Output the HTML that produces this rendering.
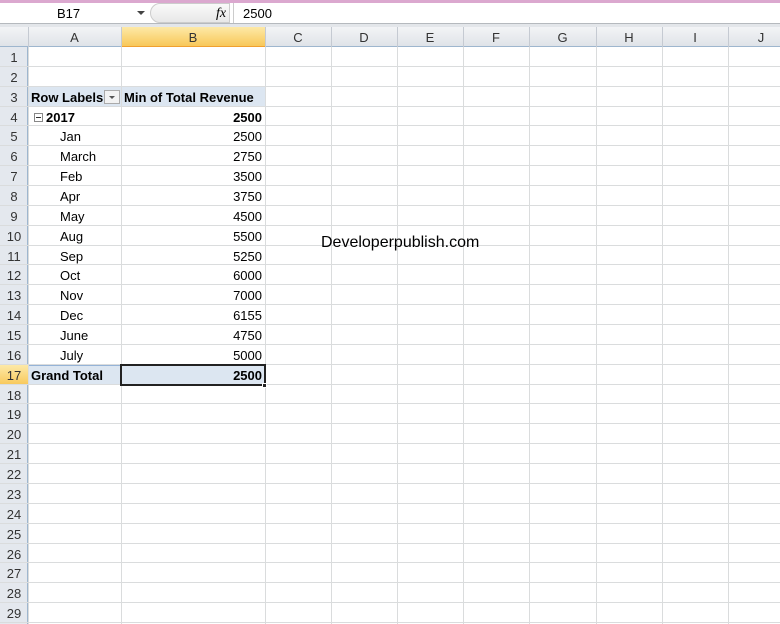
<!DOCTYPE html><html style="overflow:hidden;height:624px"><head><style>
body{margin:0;width:780px;height:624px;overflow:hidden;background:#fff;font-family:"Liberation Sans",sans-serif;position:relative}
div{position:absolute;box-sizing:border-box}
.t{font-size:13px;color:#000;white-space:nowrap;line-height:21px}
</style></head><body>
<div style="left:0;top:0;width:780px;height:3px;background:#dba8cf"></div>
<div style="left:0;top:23px;width:780px;height:4px;background:#e3e6ea;border-top:1px solid #b5b9be"></div>
<div class="t" style="left:57px;top:3px;font-size:13px">B17</div>
<div style="left:137px;top:11px;border:4px solid transparent;border-top:4px solid #444;width:0;height:0"></div>
<div style="left:150px;top:3px;width:80px;height:20px;border-radius:10px 0 0 10px;border:1px solid #ccc;background:linear-gradient(#fafafa,#e8e8e8)"></div>
<div class="t" style="left:216px;top:3px;font-style:italic;font-family:'Liberation Serif',serif;font-size:14px">fx</div>
<div style="left:233px;top:3px;width:1px;height:20px;background:#ccc"></div>
<div class="t" style="left:243px;top:3px;font-size:13px">2500</div>
<div id="g"></div>
<script>
var cols=[0,28,121,265,331,397,463,529,596,662,728,794],names=" ABCDEFGHIJ";
var h='';var top0=47,rh=19.86;
h+='<div style="left:0;top:27px;width:780px;height:20px;background:linear-gradient(#f3f4f6,#dfe3e8);border-bottom:1px solid #9eb6ce"></div>';
h+='<div style="left:0;top:47px;width:28px;height:577px;background:#e4e8ee;border-right:1px solid #9eb6ce"></div>';
h+='<div style="left:121px;top:27px;width:144px;height:20px;background:linear-gradient(#fde9a7,#f8c85a);border-bottom:1px solid #f0a030"></div>';
h+='<div style="left:0;top:'+(top0+16*rh)+'px;width:28px;height:'+rh+'px;background:linear-gradient(#fde9a7,#f8c85a)"></div>';
h+='<div style="left:28px;top:'+(top0+2*rh)+'px;width:237px;height:'+rh+'px;background:#dce6f1;border-bottom:1px solid #95b3d7"></div>';
h+='<div style="left:28px;top:'+(top0+16*rh)+'px;width:237px;height:'+rh+'px;background:#dce6f1;border-top:1px solid #95b3d7"></div>';
for(var i=1;i<cols.length;i++){var x=cols[i];h+='<div style="left:'+x+'px;top:27px;width:1px;height:20px;background:#c5cad2"></div>';h+='<div style="left:'+x+'px;top:47px;width:1px;height:577px;background:#dadcdd"></div>';
if(i<11)h+='<div class="t" style="left:'+cols[i]+'px;width:'+(cols[i+1]-cols[i])+'px;top:27px;text-align:center;color:#333">'+names[i]+'</div>';}
for(var r=1;r<=29;r++){var y=top0+r*rh;h+='<div style="left:0;top:'+(y-1)+'px;width:780px;height:1px;background:#dadcdd"></div>';
h+='<div class="t" style="left:0;width:28px;text-align:center;top:'+(y-rh)+'px;color:#333">'+r+'</div>';}
var d=[["Jan",2500],["March",2750],["Feb",3500],["Apr",3750],["May",4500],["Aug",5500],["Sep",5250],["Oct",6000],["Nov",7000],["Dec",6155],["June",4750],["July",5000]];
function cell(r,x,w,txt,st){return '<div class="t" style="left:'+x+'px;width:'+w+'px;top:'+(top0+(r-1)*rh)+'px;'+st+'">'+txt+'</div>';}
h+=cell(3,31,90,'<b>Row Labels</b>','');
h+='<div style="left:104px;top:'+(top0+2*rh+3)+'px;width:16px;height:14px;border:1px solid #aaa;background:#f2f2f2"><div style="left:4px;top:5px;border:3px solid transparent;border-top:3px solid #555;width:0;height:0"></div></div>';
h+=cell(3,124,140,'<b>Min of Total Revenue</b>','');
h+='<div style="left:34px;top:'+(top0+3*rh+6)+'px;width:9px;height:9px;border:1px solid #888;background:#fff"><div style="left:1px;top:3px;width:5px;height:1px;background:#333"></div></div>';
h+=cell(4,46,60,'<b>2017</b>','');h+=cell(4,121,141,'<b>2500</b>','text-align:right');
for(var k=0;k<d.length;k++){h+=cell(5+k,60,60,d[k][0],'');h+=cell(5+k,121,141,d[k][1],'text-align:right');}
h+=cell(17,31,90,'<b>Grand Total</b>','');h+=cell(17,121,141,'<b>2500</b>','text-align:right');
h+='<div style="left:120px;top:'+(top0+16*rh-1)+'px;width:146px;height:'+(rh+2)+'px;border:2px solid #222"></div>';
h+='<div style="left:262px;top:'+(top0+17*rh-2)+'px;width:5px;height:5px;background:#222;border:1px solid #fff"></div>';
h+='<div class="t" style="left:321px;top:232px;font-size:16px;line-height:22px">Developerpublish.com</div>';
document.getElementById('g').outerHTML=h;
</script>
</body></html>
